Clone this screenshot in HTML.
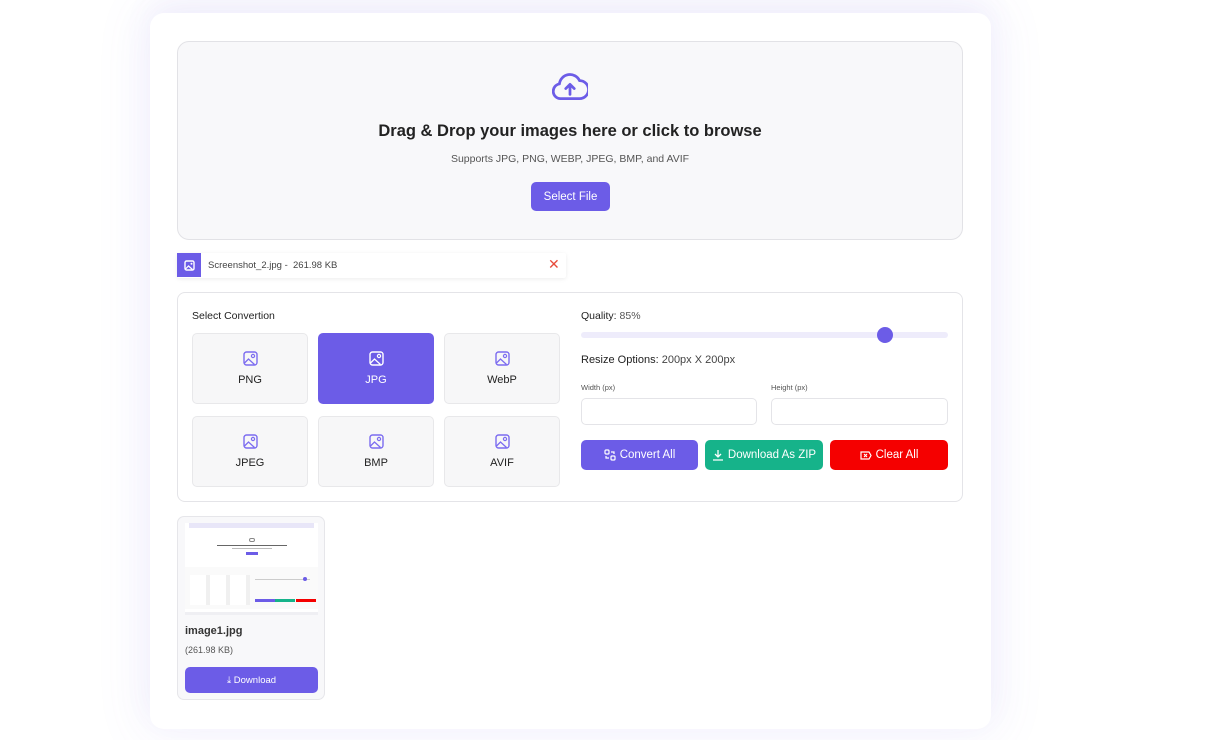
<!DOCTYPE html>
<html><head><style>
*{box-sizing:border-box;margin:0;padding:0}
body{width:1220px;height:740px;overflow:hidden;font-family:"Liberation Sans",sans-serif;color:#222;background:#fff;position:relative}
.card{position:absolute;left:150px;top:13px;width:841px;height:716px;background:#fff;border-radius:14px;box-shadow:0 0 50px 10px rgba(120,105,220,.07),0 -12px 30px rgba(120,105,220,.06)}
.abs{position:absolute}
.drop{left:177px;top:41px;width:786px;height:199px;background:#f8f8fa;border:1px solid #e2e2e6;border-radius:12px;text-align:center}
.btn{color:#fff;border-radius:5px;font-size:11.5px;display:flex;align-items:center;justify-content:center;gap:4px}
.fmt{width:116px;height:71px;border:1px solid #e8e8ea;background:#f7f7f8;border-radius:5px;display:flex;flex-direction:column;align-items:center;justify-content:center;font-size:11px;gap:8px;color:#222}
.fmt.sel{background:#6c5ce7;color:#fff;border-color:#6c5ce7}
.inp{height:27px;border:1px solid #e4e4e8;border-radius:5px;background:#fff}
.t{height:1px;background:#999;margin:0 auto}
</style></head><body>
<div class="card"></div>
<div class="abs drop">
 <svg class="abs" style="left:374px;top:29px" width="36" height="32" viewBox="0 0 34 30"><path d="M9 26H8a7 7 0 0 1-1-13.9A10 10 0 0 1 26 9a8.5 8.5 0 0 1 0 17H9z" fill="none" stroke="#6c5ce7" stroke-width="2.6" stroke-linejoin="round"/><path d="M17 22V13M13 16.5l4-4 4 4" fill="none" stroke="#6c5ce7" stroke-width="2.6" stroke-linecap="round" stroke-linejoin="round"/></svg>
 <div class="abs" style="left:0;right:0;top:80px;font-size:16.5px;font-weight:bold;color:#222">Drag &amp; Drop your images here or click to browse</div>
 <div class="abs" style="left:0;right:0;top:111px;font-size:10.5px;color:#555">Supports JPG, PNG, WEBP, JPEG, BMP, and AVIF</div>
 <div class="abs btn" style="left:353px;top:140px;width:79px;height:29px;background:#6c5ce7">Select File</div>
</div>
<div class="abs" style="left:177px;top:253px;width:389px;height:25px;background:#fff;box-shadow:0 1px 4px rgba(0,0,0,.08);border-radius:2px"></div>
<div class="abs" style="left:177px;top:253px;width:24px;height:24px;background:#6c5ce7;display:flex;align-items:center;justify-content:center"><svg width="11" height="11" viewBox="0 0 11 11"><rect x="1" y="1" width="9" height="9" rx="1.5" fill="none" stroke="#fff" stroke-width="1.4"/><path d="M1.5 9l3-3 4 3.5" fill="none" stroke="#fff" stroke-width="1.2"/><circle cx="7.5" cy="3.8" r="1" fill="#fff"/></svg></div>
<div class="abs" style="left:208px;top:260px;font-size:9.5px;color:#444">Screenshot_2.jpg -&nbsp; 261.98 KB</div>
<div class="abs" style="left:548px;top:257px;color:#e74c3c;font-size:14px;line-height:14px">✕</div>
<div class="abs" style="left:177px;top:292px;width:786px;height:210px;border:1px solid #e4e4e8;border-radius:8px;background:#fff"></div>
<div class="abs" style="left:192px;top:310px;font-size:10.5px;color:#222">Select Convertion</div>
<div class="abs" style="left:192px;top:333px;display:grid;grid-template-columns:116px 116px 116px;column-gap:10px;row-gap:12px">
 <div class="fmt"><svg width="15" height="15" viewBox="0 0 15 15"><rect x="1" y="1" width="13" height="13" rx="2.5" fill="none" stroke="#7c6cf0" stroke-width="1.4"/><path d="M1.5 12l4-4 6 5.5" fill="none" stroke="#7c6cf0" stroke-width="1.3"/><circle cx="10" cy="5" r="1.6" fill="none" stroke="#7c6cf0" stroke-width="1.2"/></svg>PNG</div>
 <div class="fmt sel"><svg width="15" height="15" viewBox="0 0 15 15"><rect x="1" y="1" width="13" height="13" rx="2.5" fill="none" stroke="#fff" stroke-width="1.4"/><path d="M1.5 12l4-4 6 5.5" fill="none" stroke="#fff" stroke-width="1.3"/><circle cx="10" cy="5" r="1.6" fill="none" stroke="#fff" stroke-width="1.2"/></svg>JPG</div>
 <div class="fmt"><svg width="15" height="15" viewBox="0 0 15 15"><rect x="1" y="1" width="13" height="13" rx="2.5" fill="none" stroke="#7c6cf0" stroke-width="1.4"/><path d="M1.5 12l4-4 6 5.5" fill="none" stroke="#7c6cf0" stroke-width="1.3"/><circle cx="10" cy="5" r="1.6" fill="none" stroke="#7c6cf0" stroke-width="1.2"/></svg>WebP</div>
 <div class="fmt"><svg width="15" height="15" viewBox="0 0 15 15"><rect x="1" y="1" width="13" height="13" rx="2.5" fill="none" stroke="#7c6cf0" stroke-width="1.4"/><path d="M1.5 12l4-4 6 5.5" fill="none" stroke="#7c6cf0" stroke-width="1.3"/><circle cx="10" cy="5" r="1.6" fill="none" stroke="#7c6cf0" stroke-width="1.2"/></svg>JPEG</div>
 <div class="fmt"><svg width="15" height="15" viewBox="0 0 15 15"><rect x="1" y="1" width="13" height="13" rx="2.5" fill="none" stroke="#7c6cf0" stroke-width="1.4"/><path d="M1.5 12l4-4 6 5.5" fill="none" stroke="#7c6cf0" stroke-width="1.3"/><circle cx="10" cy="5" r="1.6" fill="none" stroke="#7c6cf0" stroke-width="1.2"/></svg>BMP</div>
 <div class="fmt"><svg width="15" height="15" viewBox="0 0 15 15"><rect x="1" y="1" width="13" height="13" rx="2.5" fill="none" stroke="#7c6cf0" stroke-width="1.4"/><path d="M1.5 12l4-4 6 5.5" fill="none" stroke="#7c6cf0" stroke-width="1.3"/><circle cx="10" cy="5" r="1.6" fill="none" stroke="#7c6cf0" stroke-width="1.2"/></svg>AVIF</div>
</div>
<div class="abs" style="left:581px;top:310px;font-size:10.5px;color:#222">Quality: <span style="color:#555">85%</span></div>
<div class="abs" style="left:581px;top:332px;width:367px;height:6px;background:#eeecfb;border-radius:3px"></div>
<div class="abs" style="left:877px;top:327px;width:16px;height:16px;background:#6c5ce7;border-radius:50%"></div>
<div class="abs" style="left:581px;top:354px;font-size:11px;color:#222">Resize Options: <span style="color:#444">200px X 200px</span></div>
<div class="abs" style="left:581px;top:383px;font-size:7.5px;color:#555">Width (px)</div>
<div class="abs" style="left:771px;top:383px;font-size:7.5px;color:#555">Height (px)</div>
<div class="abs inp" style="left:581px;top:398px;width:176px"></div>
<div class="abs inp" style="left:771px;top:398px;width:177px"></div>
<div class="abs btn" style="left:581px;top:440px;width:117px;height:30px;background:#6c5ce7"><svg width="12" height="12" viewBox="0 0 12 12" fill="none" stroke="#fff" stroke-width="1.2"><rect x="1" y="1" width="4" height="4" rx="1"/><rect x="7" y="7" width="4" height="4" rx="1"/><path d="M7 3h3v2M5 9H2V7"/></svg>Convert All</div>
<div class="abs btn" style="left:705px;top:440px;width:118px;height:30px;background:#16b38a"><svg width="12" height="12" viewBox="0 0 12 12" fill="none" stroke="#fff" stroke-width="1.3"><path d="M6 1v6M3 5l3 3 3-3M1 11h10"/></svg>Download As ZIP</div>
<div class="abs btn" style="left:830px;top:440px;width:118px;height:30px;background:#f50000"><svg width="12" height="11" viewBox="0 0 12 11" fill="none" stroke="#fff" stroke-width="1.2"><path d="M1 2h8l2 3.5-2 3.5H1z"/><path d="M4 4l3 3M7 4l-3 3"/></svg>Clear All</div>
<div class="abs" style="left:177px;top:516px;width:148px;height:184px;border:1px solid #e6e6ea;border-radius:7px;background:#f8f8fa"></div>
<div class="abs" style="left:185px;top:523px;width:133px;height:92px;background:#fff;overflow:hidden">
 <div style="height:5px;background:#e8e6f8;margin:0 4px"></div>
 <div style="width:6px;height:4px;border:1px solid #888;margin:10px auto 3px;border-radius:3px"></div>
 <div class="t" style="width:70px;background:#666;margin-bottom:2px"></div>
 <div class="t" style="width:40px;background:#bbb;margin-bottom:3px"></div>
 <div style="width:12px;height:3px;background:#6c5ce7;margin:0 auto"></div>
 <div style="position:absolute;left:0;top:44px;width:133px;height:42px;background:#fafafa"></div>
 <div style="position:absolute;left:5px;top:52px;width:60px;height:30px;background:repeating-linear-gradient(90deg,#fff 0 16px,#f0f0f0 16px 20px)"></div>
 <div style="position:absolute;left:70px;top:56px;width:55px;height:1px;background:#ccc"></div>
 <div style="position:absolute;left:118px;top:54px;width:4px;height:4px;border-radius:50%;background:#6c5ce7"></div>
 <div style="position:absolute;left:70px;top:76px;width:20px;height:3px;background:#6c5ce7"></div>
 <div style="position:absolute;left:90px;top:76px;width:20px;height:3px;background:#16b38a"></div>
 <div style="position:absolute;left:111px;top:76px;width:20px;height:3px;background:#f50000"></div>
 <div style="position:absolute;left:0;top:89px;width:133px;height:3px;background:#efeff3"></div>
</div>
<div class="abs" style="left:185px;top:625px;font-size:11px;font-weight:bold;color:#333">image1.jpg</div>
<div class="abs" style="left:185px;top:645px;font-size:9px;color:#555">(261.98 KB)</div>
<div class="abs btn" style="left:185px;top:667px;width:133px;height:26px;background:#6c5ce7;font-size:9.5px">⤓ Download</div>
</body></html>
